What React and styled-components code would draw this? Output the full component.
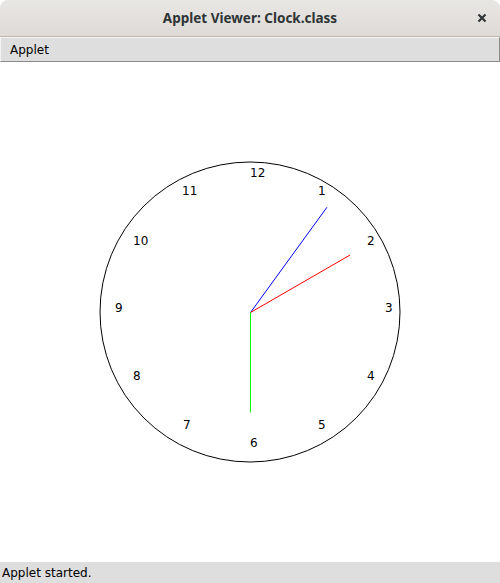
import styled, { createGlobalStyle } from "styled-components";

const GlobalStyle = createGlobalStyle`
  html, body {
    margin: 0;
    padding: 0;
    background: #ffffff;
  }
`;

const Window = styled.div`
  width: 500px;
  height: 583px;
  display: flex;
  flex-direction: column;
  background: #ffffff;
  overflow: hidden;
`;

const TitleBar = styled.div`
  height: 36px;
  flex: none;
  display: flex;
  align-items: center;
  justify-content: center;
  position: relative;
  background: linear-gradient(#e8e6e3, #dedbd7);
  border-bottom: 1px solid #bdb6ae;
  border-radius: 8px 8px 0 0;
  font-family: "Noto Sans", "DejaVu Sans", sans-serif;
  font-weight: bold;
  font-size: 13.5px;
  color: #2e3436;
`;

const CloseButton = styled.div`
  position: absolute;
  right: 13px;
  top: 13px;
  width: 10px;
  height: 10px;
  display: flex;
`;

const MenuBar = styled.div`
  height: 23px;
  flex: none;
  display: flex;
  align-items: center;
  background: #dedede;
  border-top: 1px solid #f4f4f4;
  border-left: 1px solid #f4f4f4;
  border-bottom: 1px solid #8a8a8a;
  border-right: 1px solid #8a8a8a;
  font-family: "DejaVu Sans", sans-serif;
  font-size: 12px;
  color: #000000;
`;

const MenuItem = styled.span`
  padding-left: 9px;
  padding-top: 1px;
`;

const Canvas = styled.div`
  flex: 1;
  display: flex;
`;

const StatusBar = styled.div`
  height: 21px;
  flex: none;
  display: flex;
  align-items: center;
  padding-left: 2px;
  background: #dedede;
  font-family: "DejaVu Sans", sans-serif;
  font-size: 12px;
  color: #000000;
`;

const cx = 250;
const cy = 250;

const hands = [
  { angle: 36, length: 130, color: "#0000ff" },
  { angle: 60, length: 115, color: "#ff0000" },
  { angle: 180, length: 100, color: "#00ff00" },
];

const point = (angle, r) => {
  const rad = (angle * Math.PI) / 180;
  return [cx + r * Math.sin(rad), cy - r * Math.cos(rad)];
};

const Clock = () => (
  <svg width="500" height="500" viewBox="0 0 500 500">
    <circle cx={cx} cy={cy} r="150" fill="none" stroke="#000" strokeWidth="1" />
    {Array.from({ length: 12 }, (_, i) => {
      const n = i + 1;
      const [x, y] = point(n * 30, 135);
      return (
        <text
          key={n}
          x={Math.round(x)}
          y={Math.round(y)}
          fontFamily="DejaVu Sans, sans-serif"
          fontSize="12"
          fill="#000"
        >
          {n}
        </text>
      );
    })}
    {hands.map((h) => {
      const [x, y] = point(h.angle, h.length);
      return (
        <line
          key={h.color}
          x1={cx + 0.5}
          y1={cy + 0.5}
          x2={x + 0.5}
          y2={y + 0.5}
          stroke={h.color}
          strokeWidth="1"
        />
      );
    })}
  </svg>
);

export default function App() {
  return (
    <>
      <GlobalStyle />
      <Window>
        <TitleBar>
          Applet Viewer: Clock.class
          <CloseButton>
            <svg width="10" height="10" viewBox="0 0 10 10">
              <path d="M1.5 1.5 L8.5 8.5 M8.5 1.5 L1.5 8.5" stroke="#2e3436" strokeWidth="2.2" />
            </svg>
          </CloseButton>
        </TitleBar>
        <MenuBar>
          <MenuItem>Applet</MenuItem>
        </MenuBar>
        <Canvas>
          <Clock />
        </Canvas>
        <StatusBar>Applet started.</StatusBar>
      </Window>
    </>
  );
}
